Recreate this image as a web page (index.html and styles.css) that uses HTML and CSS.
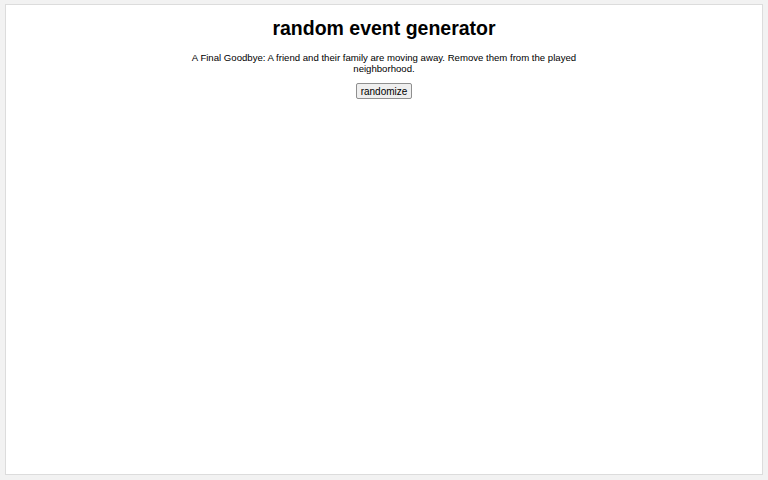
FILE: index.html
```html
<!doctype html>
<html lang="en">
<head>
    <meta charset="utf-8">
    <meta name="viewport" content="width=device-width, initial-scale=1">
    <title>random event generator</title>
    <link rel="stylesheet" href="styles.css">
</head>
<body>

<main class="page">
    <h1 class="title">random event generator</h1>
    <p id="event" class="event">A Final Goodbye: A friend and their family are moving away. Remove them from the played neighborhood.</p>
    <button type="button" id="randomize" class="randomize">randomize</button>
</main>

</body>
</html>
```

FILE: styles.css
```css
*, *:before, *:after {
    box-sizing: border-box;
    margin: 0;
    padding: 0;
}

body {
    font-family: "Liberation Sans", Arial, sans-serif;
    height: 100vh;
    padding: 4px 5px 5px 5px;
    background: #f2f2f2;
    color: #000;
}

.page {
    display: flex;
    flex-direction: column;
    align-items: center;
    height: 100%;
    padding-top: 11px;
    background: #fff;
    border: 1px solid #dcdcdc;
}

.title {
    font-size: 19.5px;
    font-weight: bold;
    line-height: 24px;
}

.event {
    width: 390px;
    margin-top: 12px;
    font-size: 9.6px;
    line-height: 11px;
    text-align: center;
}

.randomize {
    margin-top: 9px;
    padding: 2px 4px 1px;
    font-family: inherit;
    font-size: 10px;
    background: #efefef;
    border: 1px solid #8f8f8f;
    border-radius: 2px;
}
```
